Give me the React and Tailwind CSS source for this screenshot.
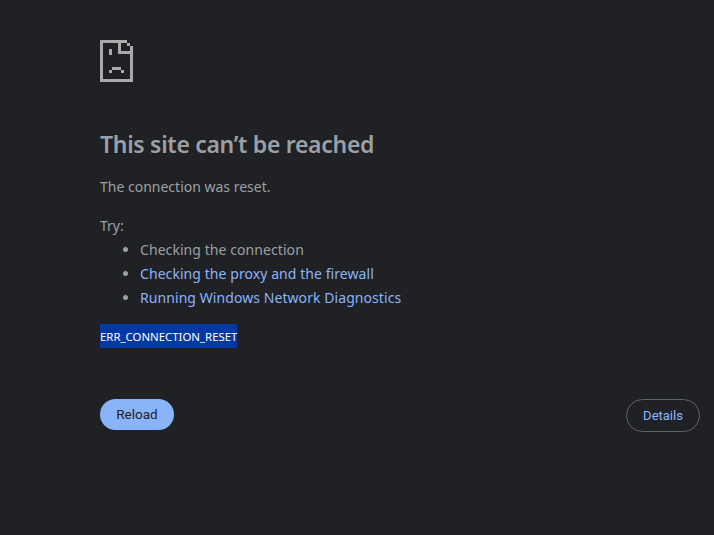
const sans = "font-['Noto_Sans','Open_Sans',sans-serif]";

function SadPage() {
  return (
    <svg width="33" height="42" viewBox="0 0 33 42" fill="#aaaaaa" shapeRendering="crispEdges" className="block">
      <path fillRule="evenodd" d="M0 0h27v3h3v3h3v36H0zM3 3v36h27V14H18V3zM21 3v8h9V6h-3V3z" />
      <path d="M9 9h3v6H9zM12 27h9v3H12zM9 30h3v3H9zM21 30h3v3h-3z" />
    </svg>
  );
}

export default function App() {
  return (
    <div className={`${sans} w-[714px] h-[535px] bg-[#202124] overflow-hidden flex flex-col pt-[40px] pl-[100px] pr-[14px]`}>
      <SadPage />
      <h1 className="mt-[46px] text-[23px] leading-[32px] font-semibold tracking-[-0.3px] text-[#9aa0a6]">This site can’t be reached</h1>
      <p className="mt-[17px] text-[14px] leading-[20px] text-[#9aa0a6]">The connection was reset.</p>
      <p className="mt-[19px] text-[14px] leading-[20px] text-[#9aa0a6]">Try:</p>
      <ul className="list-disc pl-[40px] text-[14px] leading-[24px] tracking-[0.07px] mt-[2px] marker:text-[#9aa0a6]">
        <li className="text-[#9aa0a6]">Checking the connection</li>
        <li className="text-[#8ab4f8]">Checking the proxy and the firewall</li>
        <li className="text-[#8ab4f8]">Running Windows Network Diagnostics</li>
      </ul>
      <div className="mt-[14px] self-start bg-[#0439a5] text-white text-[11.4px] leading-[24px] h-[24px] pt-[1px]">ERR_CONNECTION_RESET</div>
      <div className="mt-[51px] flex justify-between items-start">
        <button className="font-['Roboto',sans-serif] h-[31px] w-[74px] rounded-[16px] bg-[#8ab4f8] text-[#202124] text-[13.5px]">Reload</button>
        <button className="font-['Roboto',sans-serif] h-[33px] w-[74px] rounded-[17px] border border-[#5f6368] text-[#8fb8ff] text-[13px]">Details</button>
      </div>
    </div>
  );
}
